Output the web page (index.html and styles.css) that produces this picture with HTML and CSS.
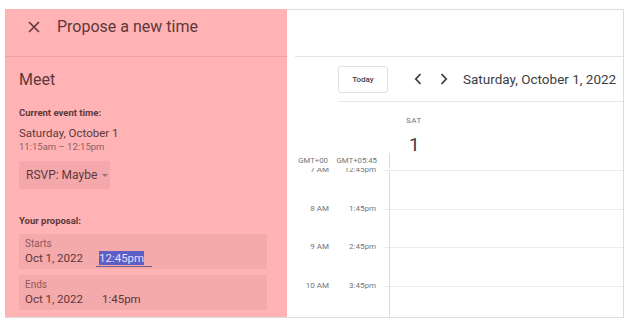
FILE: index.html
```html
<!DOCTYPE html>
<html lang="en">
<head>
  <meta charset="UTF-8" />
  <title>Propose a new time</title>
  <link rel="stylesheet" href="styles.css">
</head>
<body>
  <div class="frame">
    <div class="propose">
      <div class="propose-head">
        <svg class="close-icon" width="12" height="12" viewBox="0 0 12 12"><path d="M1 1 L11 11 M11 1 L1 11" stroke="#5e383b" stroke-width="1.6" fill="none"/></svg>
        <span class="propose-title">Propose a new time</span>
      </div>
      <div class="propose-body">
        <div class="event-name">Meet</div>
        <div class="section-label">Current event time:</div>
        <div class="event-date">Saturday, October 1</div>
        <div class="event-range">11:15am – 12:15pm</div>
        <div class="rsvp-btn">RSVP: Maybe <span class="caret"></span></div>
        <div class="section-label proposal-label">Your proposal:</div>
        <div class="time-box">
          <div class="time-label">Starts</div>
          <div class="time-row">
            <span class="time-date">Oct 1, 2022</span>
            <span class="time-field active"><span class="selected">12:45pm</span></span>
          </div>
        </div>
        <div class="time-box">
          <div class="time-label">Ends</div>
          <div class="time-row">
            <span class="time-date">Oct 1, 2022</span>
            <span class="time-field end">1:45pm</span>
          </div>
        </div>
      </div>
    </div>

    <div class="cal">
      <div class="cal-top"></div>
      <div class="toolbar">
        <div class="today-btn">Today</div>
        <svg class="chev" width="8" height="12" viewBox="0 0 8 12"><path d="M6.5 1 L1.8 6 L6.5 11" stroke="#3c4043" stroke-width="1.8" fill="none"/></svg>
        <svg class="chev" width="8" height="12" viewBox="0 0 8 12"><path d="M1.5 1 L6.2 6 L1.5 11" stroke="#3c4043" stroke-width="1.8" fill="none"/></svg>
        <span class="cal-date">Saturday, October 1, 2022</span>
      </div>
      <div class="day-head">
        <div class="day-name">SAT</div>
        <div class="day-num">1</div>
      </div>
      <div class="tz-row">
        <span class="tz tz0">GMT+00</span>
        <span class="tz tz1">GMT+05:45</span>
        <span class="tz-col"></span>
      </div>
      <div class="grid">
        <div class="hour"><span class="lbl lbl0">7 AM</span><span class="lbl lbl1">12:45pm</span><span class="tick"></span><span class="slot"></span></div>
        <div class="hour"><span class="lbl lbl0">8 AM</span><span class="lbl lbl1">1:45pm</span><span class="tick"></span><span class="slot"></span></div>
        <div class="hour"><span class="lbl lbl0">9 AM</span><span class="lbl lbl1">2:45pm</span><span class="tick"></span><span class="slot"></span></div>
        <div class="hour"><span class="lbl lbl0">10 AM</span><span class="lbl lbl1">3:45pm</span><span class="tick"></span><span class="slot"></span></div>
      </div>
    </div>
  </div>
</body>
</html>
```

FILE: styles.css
```css
body {
  margin: 0;
  background: #fff;
  font-family: Roboto, "Liberation Sans", Arial, sans-serif;
  color: #3c4043;
}
.frame {
  display: flex;
  margin: 9px 0 0 5px;
  width: 618px;
  height: 307px;
  border: 1px solid #dadce0;
  border-left: none;
}
.propose {
  width: 282px;
  margin-top: -1px;
  background: #ffb3b5;
  color: #5e383b;
}
.propose-head {
  display: flex;
  align-items: flex-start;
  height: 39px;
  padding-top: 8px;
  border-bottom: 1px solid #eda3a6;
}
.close-icon {
  margin: 4px 0 0 23px;
}
.propose-title {
  margin-left: 17px;
  font-size: 16px;
  line-height: 20px;
}
.propose-body {
  padding: 0 14px;
}
.event-name {
  margin-top: 13px;
  font-size: 16px;
  line-height: 20px;
}
.section-label {
  margin-top: 17px;
  font-size: 9.5px;
  font-weight: bold;
  line-height: 12px;
}
.event-date {
  margin-top: 7px;
  font-size: 11.5px;
  line-height: 14px;
}
.event-range {
  margin-top: 1px;
  font-size: 9.5px;
  line-height: 12px;
  color: #8f5c60;
}
.rsvp-btn {
  display: flex;
  align-items: center;
  width: 84px;
  height: 28px;
  margin-top: 8px;
  padding-left: 7px;
  background: #f4a8ab;
  border-radius: 2px;
  font-size: 12px;
  white-space: nowrap;
}
.caret {
  margin-left: 5px;
  border-left: 3.5px solid transparent;
  border-right: 3.5px solid transparent;
  border-top: 3.5px solid #a07073;
}
.proposal-label {
  margin-top: 26px;
}
.time-box {
  width: 242px;
  height: 35px;
  margin-top: 6px;
  padding-left: 6px;
  background: #f4a9ab;
}
.proposal-label + .time-box {
  margin-top: 7px;
}
.time-label {
  padding-top: 4px;
  font-size: 10px;
  line-height: 12px;
  color: #93585d;
}
.time-row {
  display: flex;
  font-size: 11.5px;
  line-height: 16px;
  white-space: nowrap;
}
.time-field {
  margin-left: 13px;
  padding: 0 3px;
}
.time-field.active {
  width: 50px;
  border-bottom: 1.5px solid #705c8f;
}
.time-field.end {
  margin-left: 16px;
}
.selected {
  background: #5c5fc4;
  color: #e4dcff;
}
.cal {
  flex: 1;
}
.cal-top {
  height: 46px;
  margin-left: 8px;
  border-bottom: 1px solid #e3e3e3;
}
.toolbar {
  display: flex;
  align-items: center;
  height: 44px;
  margin-left: 51px;
  border-bottom: 1px solid #e8e8e8;
}
.today-btn {
  width: 48px;
  height: 25px;
  border: 1px solid #e0e0e0;
  border-radius: 3px;
  font-size: 8px;
  font-weight: 500;
  line-height: 25px;
  text-align: center;
}
.chev {
  margin-left: 26px;
}
.chev + .chev {
  margin-left: 18px;
}
.cal-date {
  margin-left: 15px;
  font-size: 13.5px;
  white-space: nowrap;
}
.day-head {
  height: 51px;
  padding-left: 119px;
}
.day-name {
  padding-top: 14px;
  font-size: 8px;
  line-height: 10px;
  letter-spacing: 0.5px;
  color: #70757a;
}
.day-num {
  margin: 10px 0 0 3px;
  font-size: 19px;
  line-height: 18px;
  color: #3c4043;
}
.tz-row {
  display: flex;
  height: 15px;
}
.tz {
  padding-top: 3px;
  font-size: 7.8px;
  line-height: 10px;
  color: #70757a;
  text-align: right;
  white-space: nowrap;
}
.tz0 {
  width: 41px;
}
.tz1 {
  width: 49px;
}
.tz-col {
  margin-left: 12px;
  border-left: 1px solid #dadce0;
}
.grid {
  height: 149px;
  padding-top: 2px;
  overflow: hidden;
}
.hour {
  display: flex;
  height: 38.5px;
}
.lbl {
  margin-top: -5px;
  font-size: 8px;
  line-height: 10px;
  color: #70757a;
  text-align: right;
}
.lbl0 {
  width: 42px;
}
.lbl1 {
  width: 47px;
}
.tick {
  width: 6px;
  margin-left: 7px;
  border-top: 1px solid #ebebeb;
}
.slot {
  flex: 1;
  border-top: 1px solid #ebebeb;
  border-left: 1px solid #dadce0;
}
```
